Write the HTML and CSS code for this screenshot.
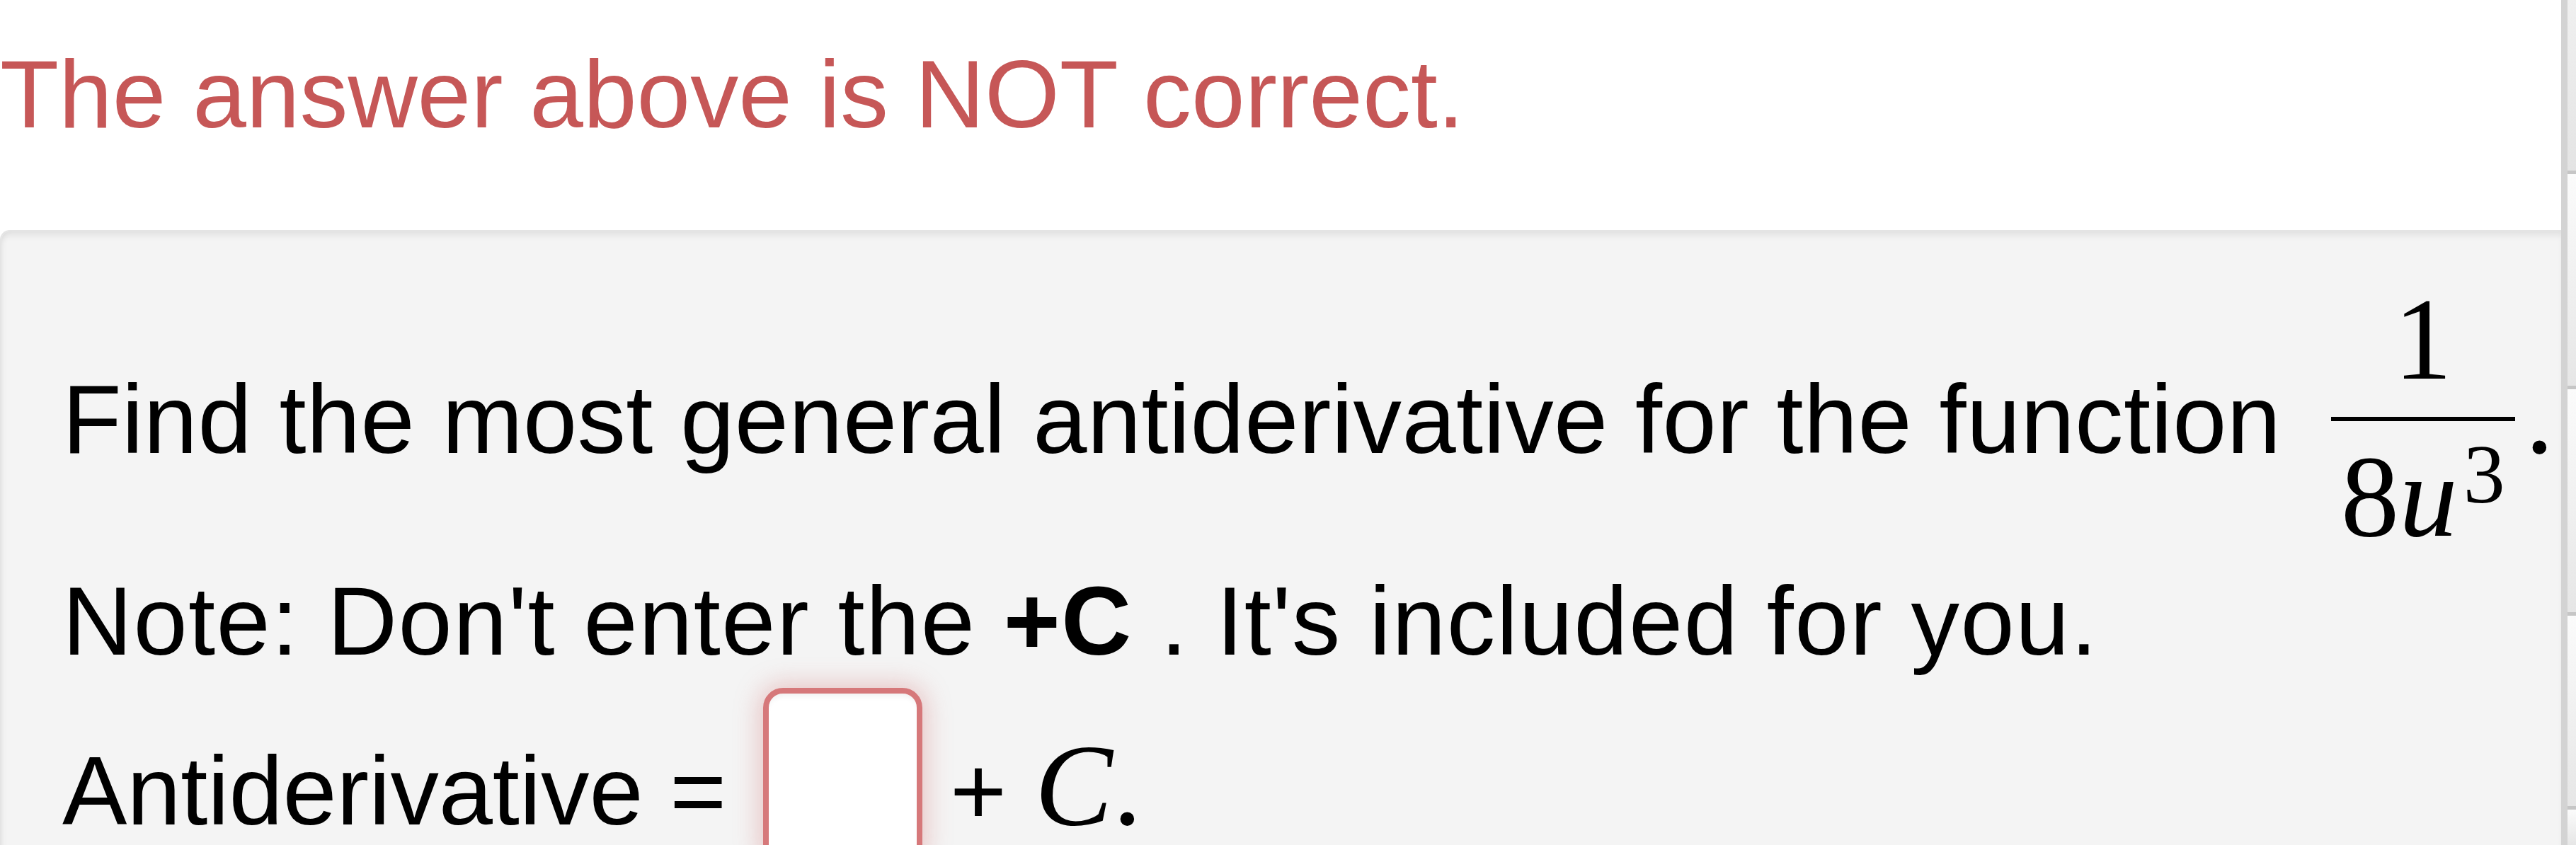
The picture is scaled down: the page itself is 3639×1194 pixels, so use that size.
FILE: index.html
```html
<!DOCTYPE html>
<html lang="en">
<head>
<meta charset="utf-8">
<title>Antiderivative problem</title>
<link rel="stylesheet" href="styles.css">
</head>
<body>
<div class="page">
  <main class="main">
    <p class="feedback">The answer above is NOT correct.</p>
    <section class="problem">
      <p class="line l1">Find the most general antiderivative for the function <span class="frac"><span class="num m">1</span><span class="bar"></span><span class="den"><span class="m">8</span><span class="mi u">u</span><span class="m sup">3</span></span></span><span class="m">.</span></p>
      <p class="line l2">Note: Don't enter the <b>+C</b> . It's included for you.</p>
      <p class="line l3">Antiderivative = <span class="answer"></span><span class="tail"> + <span class="mi">C</span><span class="m">.</span></span></p>
    </section>
  </main>
  <div class="divider"></div>
  <aside class="side">
    <div class="cell c1"></div>
    <div class="cell c2"></div>
    <div class="cell c3"></div>
    <div class="cell c4"></div>
    <div class="cell c5"></div>
  </aside>
</div>
</body>
</html>
```
FILE: styles.css
```css
html, body {
  margin: 0;
  padding: 0;
  background: #ffffff;
  height: 100%;
  overflow: hidden;
}

.page {
  display: flex;
  height: 100vh;
  overflow: hidden;
  font-family: "Liberation Sans", Arial, Helvetica, sans-serif;
}

.main {
  width: 3618px;
  flex: none;
  display: flex;
  flex-direction: column;
}

.feedback {
  margin: 0 0 114px 0;
  padding-top: 55px;
  font-size: 136px;
  line-height: 156px;
  color: #c65757;
  white-space: nowrap;
}

.problem {
  flex: 1;
  background: #f4f4f4;
  border: 2px solid #e4e4e4;
  border-right: none;
  border-radius: 14px 0 0 0;
  box-shadow: inset 0 9px 10px -3px rgba(0, 0, 0, 0.07), inset 6px 0 8px -4px rgba(0, 0, 0, 0.04);
  padding: 70px 0 0 86px;
  color: #000;
}

.line {
  margin: 0 0 16px 0;
  font-size: 137px;
  line-height: 156px;
  white-space: nowrap;
}

.l1 { letter-spacing: 0.37px; }
.l2 { letter-spacing: 1.45px; }
.l3 { letter-spacing: -0.14px; }

.line b {
  font-weight: 700;
}

.tail {
  letter-spacing: 0.8px;
}

.m, .mi {
  font-family: "Liberation Serif", "Times New Roman", serif;
  font-size: 165px;
  letter-spacing: 0;
  line-height: 1;
}

.mi {
  font-style: italic;
}

.frac {
  display: inline-flex;
  flex-direction: column;
  align-items: stretch;
  vertical-align: 105px;
  margin: 0 14px 0 32px;
}

.num {
  display: block;
  text-align: center;
  line-height: 165px;
}

.bar {
  display: block;
  height: 6px;
  margin-top: 27px;
  background: #000;
}

.den {
  display: block;
  margin-top: 24px;
  padding: 0 14px;
  font-family: "Liberation Serif", "Times New Roman", serif;
  font-size: 165px;
  line-height: 165px;
  text-align: center;
  letter-spacing: 0;
}

.u {
  margin-right: 8px;
}

.sup {
  font-size: 118px;
  line-height: 0;
  vertical-align: 47px;
}

.answer {
  display: inline-block;
  box-sizing: border-box;
  width: 225px;
  height: 250px;
  margin-left: 14px;
  vertical-align: -57px;
  background: #ffffff;
  border: 8px solid #d6787a;
  border-radius: 28px;
  box-shadow: 0 0 34px 6px rgba(214, 120, 122, 0.38), inset 0 8px 10px -6px rgba(0, 0, 0, 0.08);
}

.divider {
  width: 9px;
  flex: none;
  background: #d3d3d3;
}

.side {
  flex: 1;
  display: flex;
  flex-direction: column;
}

.cell {
  flex: none;
  background: linear-gradient(#fbfbfb, #e6e6e6);
  border-bottom: 5px solid #c6c6c6;
}

.c1 { height: 241px; background: linear-gradient(#f0f0f0, #e4e4e4); }
.c2 { height: 299px; }
.c3 { height: 315px; }
.c4 { height: 269px; }
.c5 { flex: 1; border-bottom: none; }
```
